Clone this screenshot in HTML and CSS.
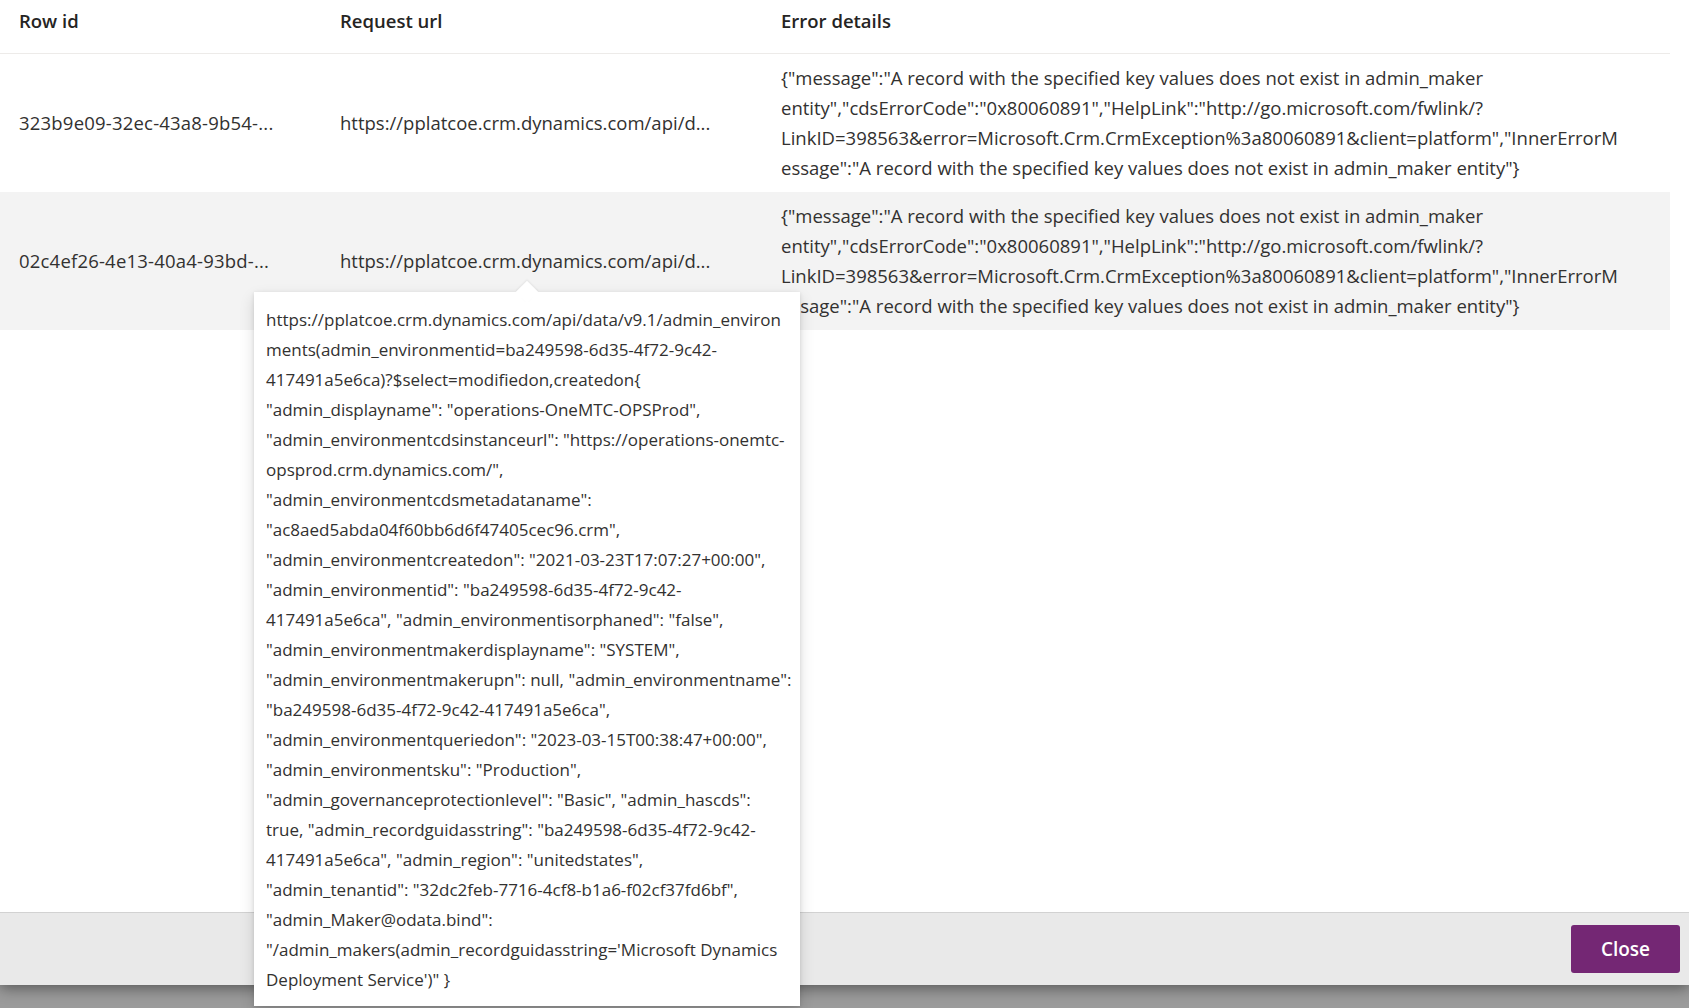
FILE: index.html
```html
<!DOCTYPE html>
<html lang="en">
<head>
<meta charset="utf-8">
<title>Error details</title>
<link rel="stylesheet" href="styles.css">
</head>
<body>
<div class="dialog">
  <div class="grid">
    <div class="row head">
      <div class="cell">Row id</div>
      <div class="cell">Request url</div>
      <div class="cell">Error details</div>
    </div>
    <div class="row data">
      <div class="cell id">323b9e09-32ec-43a8-9b54-...</div>
      <div class="cell">https://pplatcoe.crm.dynamics.com/api/d...</div>
      <div class="cell lines">
        <span>{"message":"A record with the specified key values does not exist in admin_maker</span>
        <span>entity","cdsErrorCode":"0x80060891","HelpLink":"http://go.microsoft.com/fwlink/?</span>
        <span>LinkID=398563&amp;error=Microsoft.Crm.CrmException%3a80060891&amp;client=platform","InnerErrorM</span>
        <span>essage":"A record with the specified key values does not exist in admin_maker entity"}</span>
      </div>
    </div>
    <div class="row data alt">
      <div class="cell id">02c4ef26-4e13-40a4-93bd-...</div>
      <div class="cell">https://pplatcoe.crm.dynamics.com/api/d...</div>
      <div class="cell lines">
        <span>{"message":"A record with the specified key values does not exist in admin_maker</span>
        <span>entity","cdsErrorCode":"0x80060891","HelpLink":"http://go.microsoft.com/fwlink/?</span>
        <span>LinkID=398563&amp;error=Microsoft.Crm.CrmException%3a80060891&amp;client=platform","InnerErrorM</span>
        <span>essage":"A record with the specified key values does not exist in admin_maker entity"}</span>
      </div>
      <div class="tooltip lines">
        <div class="beak"></div>
        <span>https://pplatcoe.crm.dynamics.com/api/data/v9.1/admin_environ</span>
        <span>ments(admin_environmentid=ba249598-6d35-4f72-9c42-</span>
        <span>417491a5e6ca)?$select=modifiedon,createdon{</span>
        <span>"admin_displayname": "operations-OneMTC-OPSProd",</span>
        <span>"admin_environmentcdsinstanceurl": "https://operations-onemtc-</span>
        <span>opsprod.crm.dynamics.com/",</span>
        <span>"admin_environmentcdsmetadataname":</span>
        <span>"ac8aed5abda04f60bb6d6f47405cec96.crm",</span>
        <span>"admin_environmentcreatedon": "2021-03-23T17:07:27+00:00",</span>
        <span>"admin_environmentid": "ba249598-6d35-4f72-9c42-</span>
        <span>417491a5e6ca", "admin_environmentisorphaned": "false",</span>
        <span>"admin_environmentmakerdisplayname": "SYSTEM",</span>
        <span>"admin_environmentmakerupn": null, "admin_environmentname":</span>
        <span>"ba249598-6d35-4f72-9c42-417491a5e6ca",</span>
        <span>"admin_environmentqueriedon": "2023-03-15T00:38:47+00:00",</span>
        <span>"admin_environmentsku": "Production",</span>
        <span>"admin_governanceprotectionlevel": "Basic", "admin_hascds":</span>
        <span>true, "admin_recordguidasstring": "ba249598-6d35-4f72-9c42-</span>
        <span>417491a5e6ca", "admin_region": "unitedstates",</span>
        <span>"admin_tenantid": "32dc2feb-7716-4cf8-b1a6-f02cf37fd6bf",</span>
        <span>"admin_Maker@odata.bind":</span>
        <span>"/admin_makers(admin_recordguidasstring='Microsoft Dynamics</span>
        <span>Deployment Service')" }</span>
      </div>
    </div>
  </div>
  <div class="footer">
    <button class="btn" type="button">Close</button>
  </div>
</div>
</body>
</html>
```
FILE: styles.css
```css
* { box-sizing: border-box; }
html, body { margin: 0; height: 100%; }
body {
  background: #9b9b9b;
  font-family: "Open Sans", "Noto Sans", sans-serif;
  color: #323130;
  font-size: 18.5px;
  overflow: hidden;
}
.dialog {
  height: 985px;
  background: #fff;
  display: flex;
  flex-direction: column;
  box-shadow: 0 3px 14px rgba(0, 0, 0, 0.45);
  position: relative;
}
.grid {
  flex: 1;
  width: 1670px;
}
.row {
  display: grid;
  grid-template-columns: 321px 441px 1fr;
}
.cell { padding-left: 19px; white-space: nowrap; }
.id { letter-spacing: 0.2px; }
.head {
  height: 54px;
  padding-top: 6px;
  line-height: 30px;
  border-bottom: 1px solid #edebe9;
  font-weight: 600;
  color: #252423;
}
.data {
  position: relative;
  height: 138px;
  padding: 9px 0;
  align-items: center;
  line-height: 30px;
}
.data.alt { background: #f3f3f3; }
.lines span { display: block; white-space: nowrap; }
.footer {
  height: 73px;
  border-top: 1px solid #d2d2d2;
  background: #e9e9e9;
  display: flex;
  justify-content: flex-end;
  align-items: center;
  padding-right: 9px;
}
.btn {
  width: 109px;
  height: 48px;
  background: #742774;
  color: #fff;
  border: 0;
  border-radius: 3px;
  font-family: "Open Sans", "Noto Sans", sans-serif;
  font-weight: 600;
  font-size: 19px;
}
.tooltip {
  position: absolute;
  left: 254px;
  top: 100px;
  width: 546px;
  height: 714px;
  background: #fff;
  padding: 13px 12px;
  font-size: 17px;
  line-height: 30px;
  z-index: 10;
  box-shadow: 0 6px 14px rgba(0, 0, 0, 0.14), 0 1px 4px rgba(0, 0, 0, 0.11);
}
.beak {
  position: absolute;
  left: 265px;
  top: -8px;
  width: 16px;
  height: 16px;
  background: #fff;
  transform: rotate(45deg);
  box-shadow: -1px -1px 2px rgba(0, 0, 0, 0.06);
  z-index: -1;
}
```
